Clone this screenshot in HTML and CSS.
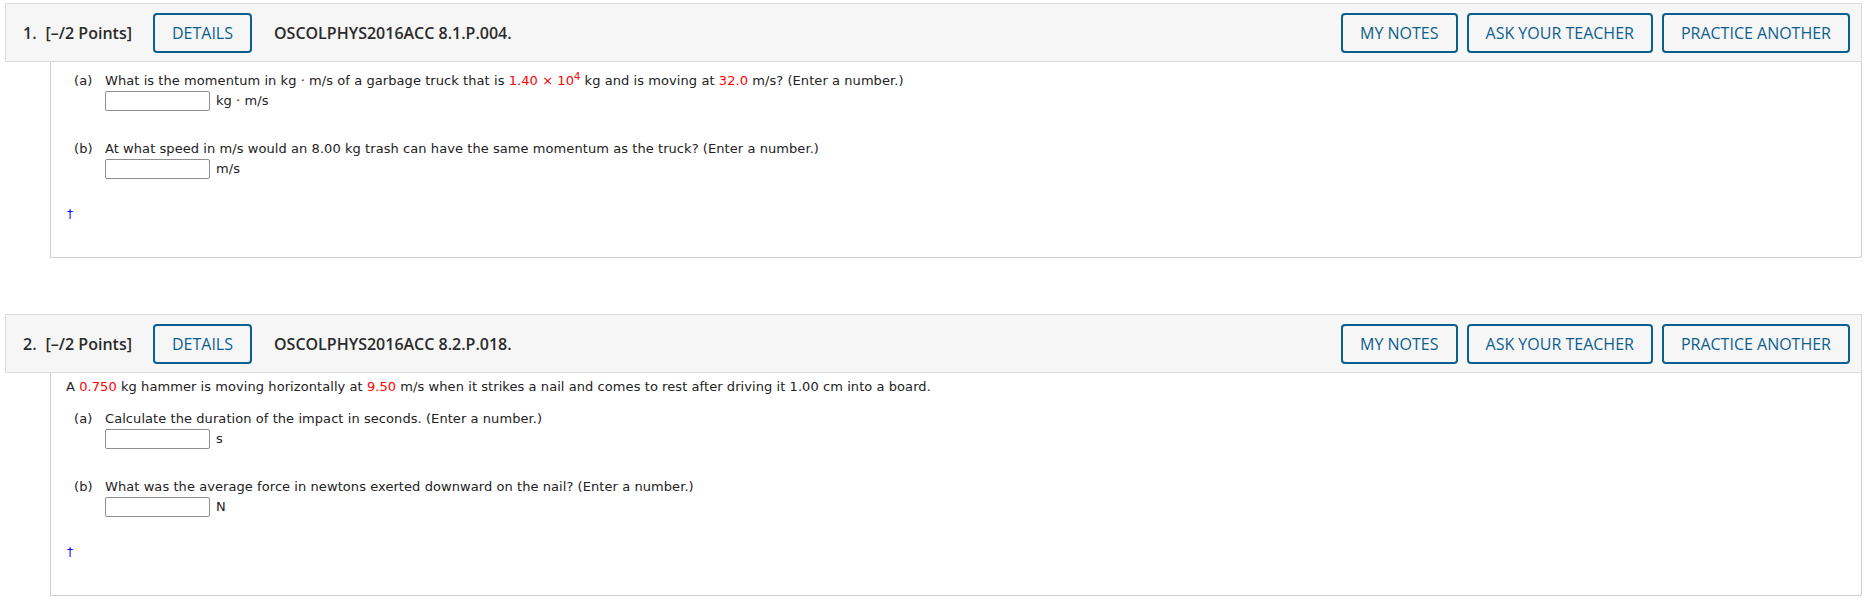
FILE: index.html
```html
<!DOCTYPE html>
<html lang="en">
  <head>
    <meta charset="UTF-8" />
    <meta name="viewport" content="width=device-width, initial-scale=1.0" />
    <title>Assignment</title>
    <link rel="stylesheet" href="styles.css">
  </head>

  <body>
    <main class="page">
      <!-- Pregunta 1 -->
      <section class="question">
        <div class="q-head">
          <span class="q-num">1.</span>
          <span class="q-points">[–/2 Points]</span>
          <button class="btn">DETAILS</button>
          <span class="q-id">OSCOLPHYS2016ACC 8.1.P.004.</span>
          <div class="q-actions">
            <button class="btn">MY NOTES</button>
            <button class="btn">ASK YOUR TEACHER</button>
            <button class="btn">PRACTICE ANOTHER</button>
          </div>
        </div>
        <div class="q-body">
          <div class="part first">
            <div class="part-text">
              <span class="part-label">(a)</span>
              <span>What is the momentum in kg · m/s of a garbage truck that is <span class="val">1.40 × 10<sup>4</sup></span> kg and is moving at <span class="val">32.0</span> m/s? (Enter a number.)</span>
            </div>
            <div class="answer">
              <input class="answer-box" type="text" />
              <span class="unit">kg · m/s</span>
            </div>
          </div>
          <div class="part">
            <div class="part-text">
              <span class="part-label">(b)</span>
              <span>At what speed in m/s would an 8.00 kg trash can have the same momentum as the truck? (Enter a number.)</span>
            </div>
            <div class="answer">
              <input class="answer-box" type="text" />
              <span class="unit">m/s</span>
            </div>
          </div>
          <div class="dagger">†</div>
        </div>
      </section>

      <!-- Pregunta 2 -->
      <section class="question">
        <div class="q-head">
          <span class="q-num">2.</span>
          <span class="q-points">[–/2 Points]</span>
          <button class="btn">DETAILS</button>
          <span class="q-id">OSCOLPHYS2016ACC 8.2.P.018.</span>
          <div class="q-actions">
            <button class="btn">MY NOTES</button>
            <button class="btn">ASK YOUR TEACHER</button>
            <button class="btn">PRACTICE ANOTHER</button>
          </div>
        </div>
        <div class="q-body">
          <p class="intro">A <span class="val">0.750</span> kg hammer is moving horizontally at <span class="val">9.50</span> m/s when it strikes a nail and comes to rest after driving it 1.00 cm into a board.</p>
          <div class="part">
            <div class="part-text">
              <span class="part-label">(a)</span>
              <span>Calculate the duration of the impact in seconds. (Enter a number.)</span>
            </div>
            <div class="answer">
              <input class="answer-box" type="text" />
              <span class="unit">s</span>
            </div>
          </div>
          <div class="part">
            <div class="part-text">
              <span class="part-label">(b)</span>
              <span>What was the average force in newtons exerted downward on the nail? (Enter a number.)</span>
            </div>
            <div class="answer">
              <input class="answer-box" type="text" />
              <span class="unit">N</span>
            </div>
          </div>
          <div class="dagger">†</div>
        </div>
      </section>
    </main>
  </body>
</html>
```

FILE: styles.css
```css
body {
  margin: 0;
  background: #fff;
}

.page {
  display: flex;
  flex-direction: column;
  gap: 56px;
  padding: 3px 12px 0 5px;
}

.q-head {
  display: flex;
  align-items: center;
  height: 57px;
  padding: 0 11px 0 17px;
  background-color: #f6f6f6;
  border: 1px solid #dcdcdc;
  font-family: "Open Sans", sans-serif;
  font-size: 16px;
  color: #2b2b2b;
}

.q-num {
  font-weight: 600;
  margin-right: 9px;
}

.q-points {
  font-weight: 600;
  margin-right: 21px;
}

.q-id {
  font-weight: 600;
  margin-left: 22px;
}

.q-actions {
  display: flex;
  gap: 9px;
  margin-left: auto;
}

.btn {
  height: 40px;
  padding: 0 17px;
  border: 2px solid #0b5f8f;
  border-radius: 4px;
  background: transparent;
  color: #0b5f8f;
  font-family: "Open Sans", sans-serif;
  font-size: 16px;
  cursor: pointer;
}

.q-body {
  margin-left: 45px;
  padding: 6px 15px 35px 15px;
  border: 1px solid #cfcfcf;
  border-top: none;
  border-bottom-right-radius: 3px;
  font-family: "DejaVu Sans", sans-serif;
  font-size: 13px;
  letter-spacing: 0.07px;
  line-height: 16px;
  color: #222;
}

.intro {
  margin: 0 0 16px 0;
}

.part {
  margin-top: 30px;
  padding-left: 8px;
}

.part.first {
  margin-top: 5px;
}

.intro + .part {
  margin-top: 0;
}

.part-text {
  display: flex;
}

.part-label {
  width: 31px;
  flex-shrink: 0;
}

.answer {
  display: flex;
  align-items: center;
  gap: 6px;
  margin: 2px 0 0 31px;
}

.answer-box {
  width: 105px;
  height: 20px;
  box-sizing: border-box;
  border: 1px solid #8f8f8f;
  border-radius: 2px;
  padding: 0;
}

.unit {
  line-height: 16px;
}

.val {
  color: #f00;
}

sup {
  font-size: 10px;
  line-height: 0;
}

.dagger {
  margin-top: 27px;
  padding-left: 1px;
  color: #00f;
  font-size: 12px;
}
```
